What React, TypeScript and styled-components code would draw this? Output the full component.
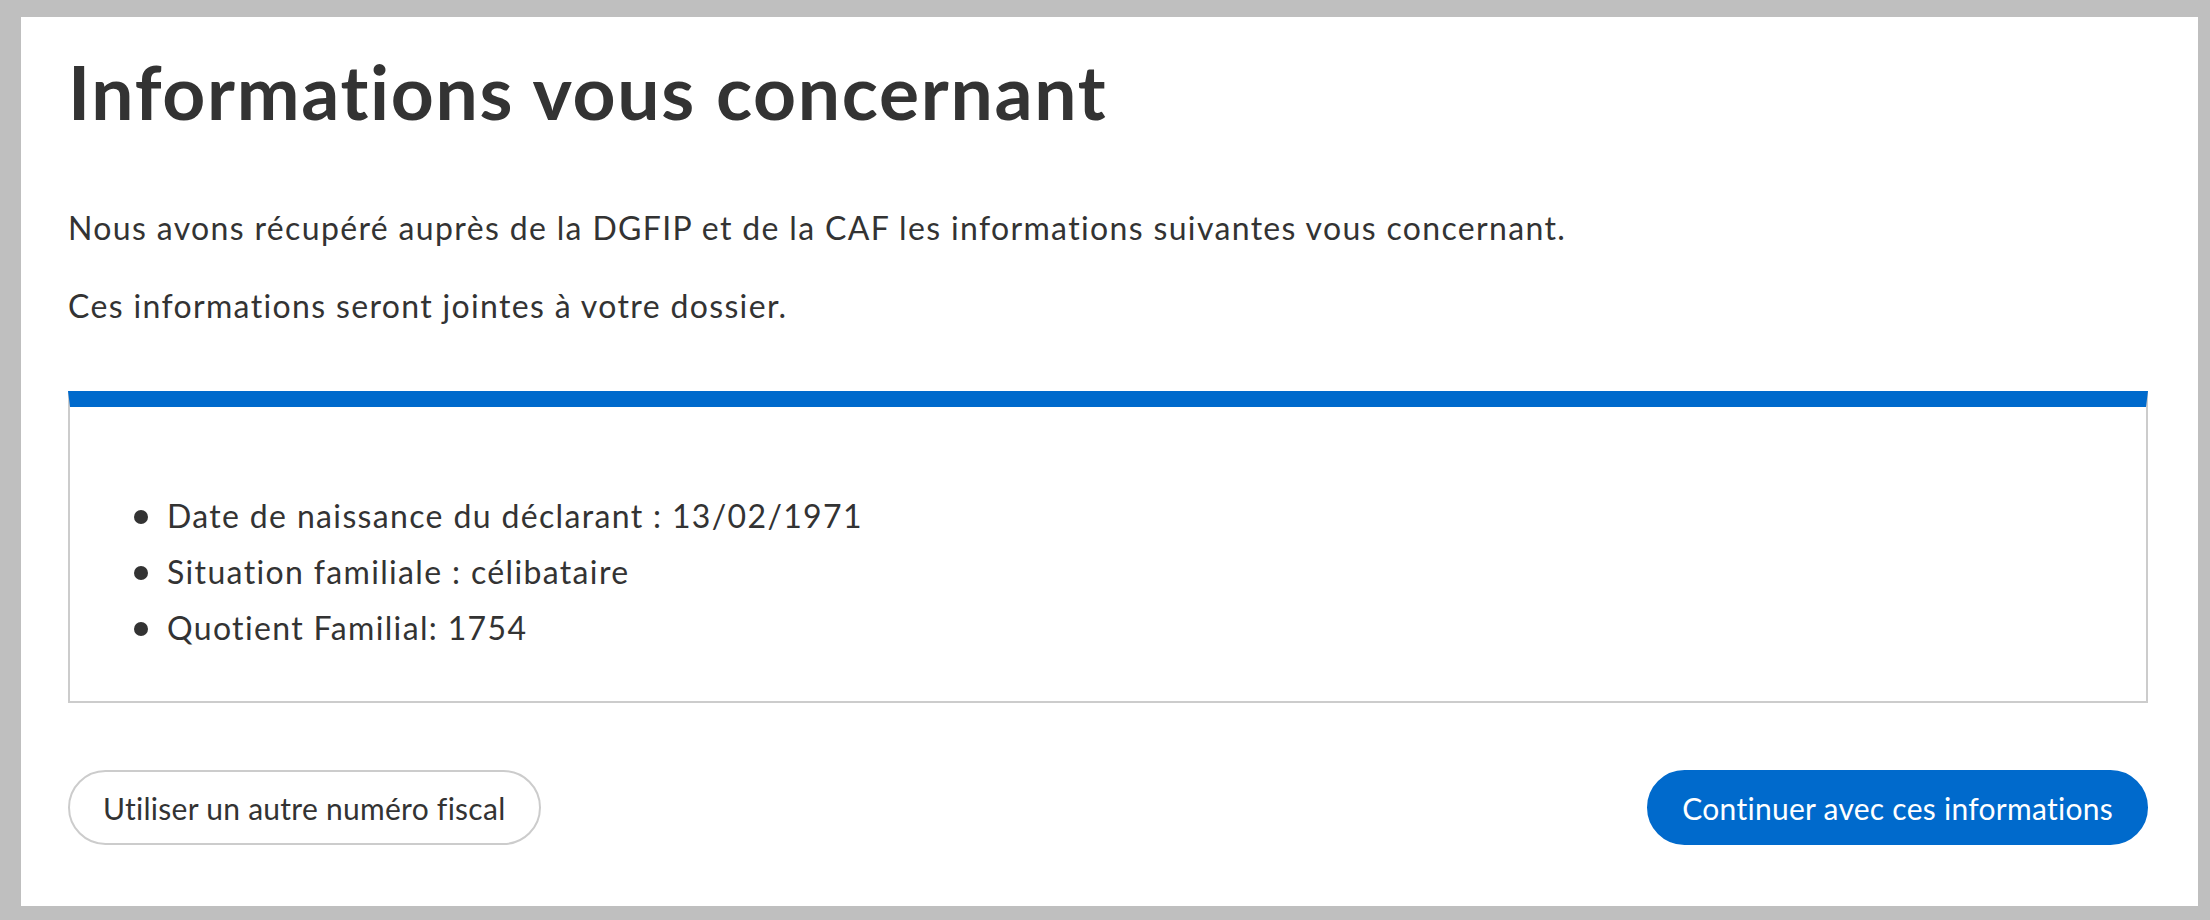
import React from 'react';
import styled, { createGlobalStyle } from 'styled-components';

const GlobalStyle = createGlobalStyle`
  html, body {
    margin: 0;
    padding: 0;
    background: #bfbfbf;
  }
  * {
    box-sizing: border-box;
  }
`;

const Page = styled.main`
  margin: 17px 12px 14px 21px;
  min-height: calc(100vh - 31px);
  padding: 0 50px 0 47px;
  background: #ffffff;
  color: #333333;
  font-family: Lato, 'Noto Sans', sans-serif;
  font-variant-ligatures: none;
  overflow: hidden;
`;

const Title = styled.h1`
  margin: 29px 0 0;
  font-size: 75px;
  line-height: 90px;
  font-weight: 700;
  letter-spacing: 1.7px;
`;

const Intro = styled.p<{ $gap: number }>`
  margin: ${(p) => p.$gap}px 0 0;
  font-size: 32px;
  line-height: 38px;
  letter-spacing: 1.35px;
`;

const Card = styled.section`
  margin-top: 66px;
  border: 2px solid #cccccc;
  border-top: 16px solid #006acc;
  padding: 81px 40px 45px;
`;

const InfoList = styled.ul`
  margin: 0;
  padding: 0 0 0 24px;
  list-style: none;
  font-size: 32px;
  line-height: 56px;
  letter-spacing: 1.35px;
`;

const InfoItem = styled.li`
  display: flex;
  align-items: center;

  &::before {
    content: '';
    flex: none;
    width: 14px;
    height: 14px;
    margin: 2px 19px 0 0;
    border-radius: 50%;
    background: #333333;
  }
`;

const Actions = styled.div`
  display: flex;
  justify-content: space-between;
  align-items: center;
  margin-top: 67px;
`;

const Button = styled.button<{ $primary?: boolean }>`
  height: 75px;
  padding: 0 33px;
  border-radius: 38px;
  border: 2px solid ${(p) => (p.$primary ? '#006acc' : '#cccccc')};
  background: ${(p) => (p.$primary ? '#006acc' : '#ffffff')};
  color: ${(p) => (p.$primary ? '#ffffff' : '#333333')};
  font-family: Lato, 'Noto Sans', sans-serif;
  font-variant-ligatures: none;
  font-size: 30px;
  letter-spacing: 0.27px;
  cursor: pointer;
`;

const infos = [
  'Date de naissance du déclarant : 13/02/1971',
  'Situation familiale : célibataire',
  'Quotient Familial: 1754',
];

export default function App() {
  return (
    <>
      <GlobalStyle />
      <Page>
        <Title>Informations vous concernant</Title>
        <Intro $gap={73}>
          Nous avons récupéré auprès de la DGFIP et de la CAF les informations suivantes vous concernant.
        </Intro>
        <Intro $gap={40}>Ces informations seront jointes à votre dossier.</Intro>
        <Card>
          <InfoList>
            {infos.map((info) => (
              <InfoItem key={info}>{info}</InfoItem>
            ))}
          </InfoList>
        </Card>
        <Actions>
          <Button>Utiliser un autre numéro fiscal</Button>
          <Button $primary>Continuer avec ces informations</Button>
        </Actions>
      </Page>
    </>
  );
}
